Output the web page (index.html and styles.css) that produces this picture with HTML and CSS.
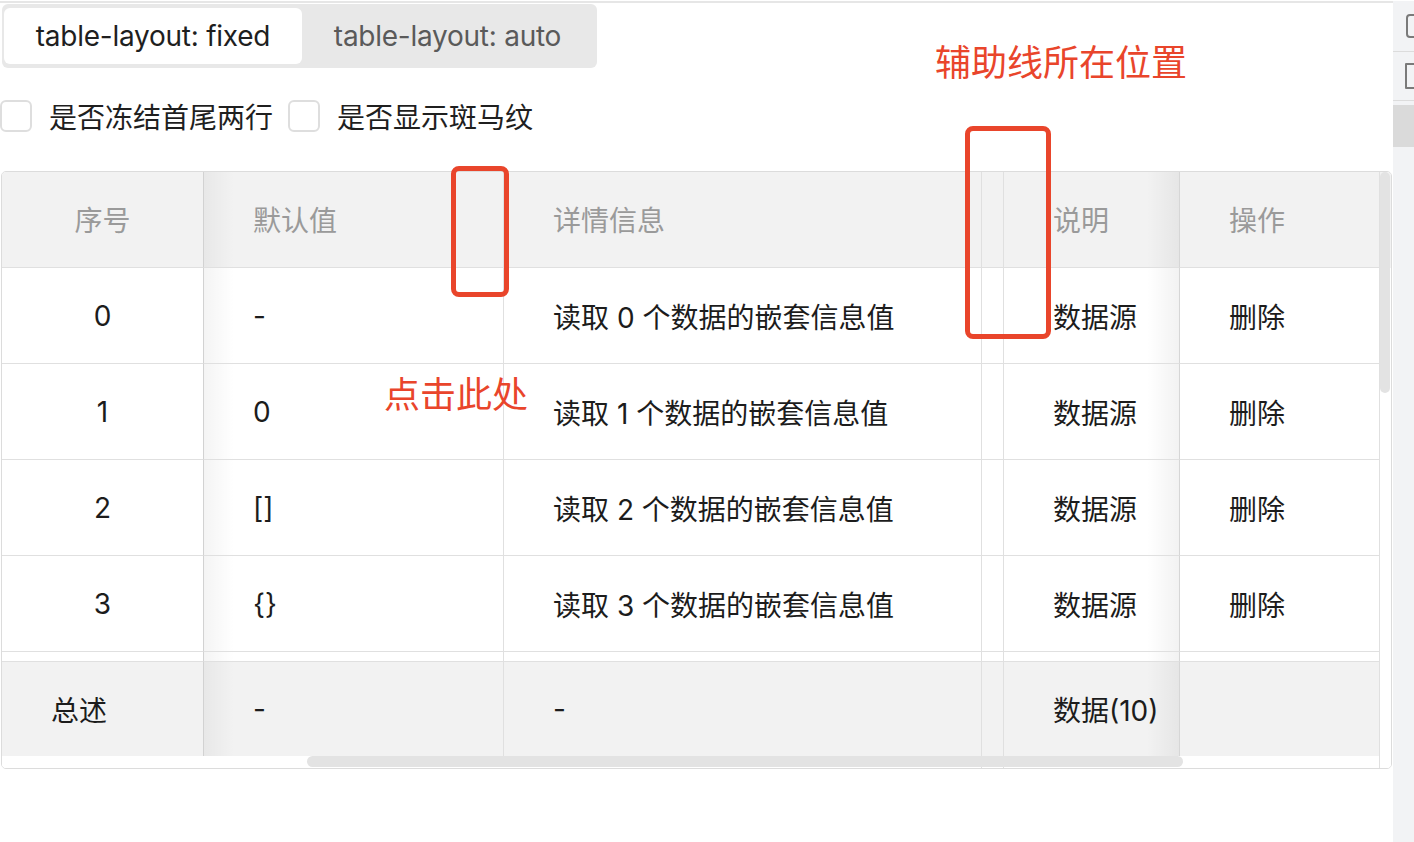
FILE: index.html
```html
<!DOCTYPE html>
<html lang="zh">
<head>
<meta charset="utf-8">
<link rel="stylesheet" href="styles.css">
</head>
<body>
<div class="page">
  <div class="main">
    <div class="seg">
      <div class="tab active t1">table-layout: fixed</div>
      <div class="tab t2">table-layout: auto</div>
    </div>
    <div class="opts">
      <label class="opt"><span class="cb"></span><span>是否冻结首尾两行</span></label>
      <label class="opt"><span class="cb"></span><span>是否显示斑马纹</span></label>
    </div>
    <div class="table">
      <div class="row head">
        <div class="c c1 center">序号</div>
        <div class="c c2">默认值</div>
        <div class="c c3">详情信息</div>
        <div class="c c4"></div>
        <div class="c c5">说明</div>
        <div class="c c6">操作</div>
        <div class="c c7"></div>
      </div>
      <div class="row body">
        <div class="c c1 center">0</div>
        <div class="c c2">-</div>
        <div class="c c3">读取 0 个数据的嵌套信息值</div>
        <div class="c c4"></div>
        <div class="c c5">数据源</div>
        <div class="c c6">删除</div>
        <div class="c c7"></div>
      </div>
      <div class="row body">
        <div class="c c1 center">1</div>
        <div class="c c2">0</div>
        <div class="c c3">读取 1 个数据的嵌套信息值</div>
        <div class="c c4"></div>
        <div class="c c5">数据源</div>
        <div class="c c6">删除</div>
        <div class="c c7"></div>
      </div>
      <div class="row body">
        <div class="c c1 center">2</div>
        <div class="c c2">[]</div>
        <div class="c c3">读取 2 个数据的嵌套信息值</div>
        <div class="c c4"></div>
        <div class="c c5">数据源</div>
        <div class="c c6">删除</div>
        <div class="c c7"></div>
      </div>
      <div class="row body">
        <div class="c c1 center">3</div>
        <div class="c c2">{}</div>
        <div class="c c3">读取 3 个数据的嵌套信息值</div>
        <div class="c c4"></div>
        <div class="c c5">数据源</div>
        <div class="c c6">删除</div>
        <div class="c c7"></div>
      </div>
      <div class="row partial">
        <div class="c c1"></div>
        <div class="c c2"></div>
        <div class="c c3"></div>
        <div class="c c4"></div>
        <div class="c c5"></div>
        <div class="c c6"></div>
        <div class="c c7"></div>
      </div>
      <div class="row foot">
        <div class="c c1">总述</div>
        <div class="c c2">-</div>
        <div class="c c3">-</div>
        <div class="c c4"></div>
        <div class="c c5">数据(10)</div>
        <div class="c c6"></div>
        <div class="c c7"></div>
      </div>
      <div class="row hbar">
        <div class="c c1"></div>
        <div class="c c2"></div>
        <div class="c c3"></div>
        <div class="c c4"></div>
        <div class="c c5"></div>
        <div class="c c6"></div>
        <div class="c c7"></div>
      </div>
      <div class="vthumb"></div>
      <div class="hthumb"></div>
    </div>
  </div>
  <div class="side">
    <div class="side-item"><span class="side-box b1"></span></div>
    <div class="side-item"><span class="side-box b2"></span></div>
    <div class="side-block"></div>
  </div>

  <div class="note note1">辅助线所在位置</div>
  <div class="note note2">点击此处</div>
  <div class="mark mark1"></div>
  <div class="mark mark2"></div>
</div>
</body>
</html>
```

FILE: styles.css
```css
html, body {
  margin: 0;
  padding: 0;
  background: #ffffff;
}

body {
  font-family: Inter, "Noto Sans CJK SC", sans-serif;
  color: #1c1c1c;
  width: 1414px;
  height: 842px;
  overflow: hidden;
}

.page {
  position: relative;
  display: flex;
  width: 1414px;
  height: 842px;
  padding-top: 1px;
  box-sizing: border-box;
}

.main {
  width: 1393px;
  border-top: 2px solid #e6e6e6;
  box-sizing: border-box;
}

/* segmented control */
.seg {
  display: flex;
  width: 595px;
  height: 64px;
  margin: 1px 0 0 2px;
  padding: 4px 2px;
  box-sizing: border-box;
  background: #e8e8e8;
  border-radius: 6px;
}

.tab {
  display: flex;
  align-items: center;
  justify-content: center;
  font-size: 28px;
  letter-spacing: -0.25px;
  color: #5a5a5a;
  border-radius: 6px;
}

.t1 { width: 298px; }
.t2 { width: 291px; }

.tab.active {
  background: #ffffff;
  color: #1f1f1f;
}

/* options */
.opts {
  display: flex;
  gap: 15px;
  margin-top: 32px;
  height: 32px;
}

.opt {
  display: flex;
  align-items: center;
  gap: 17px;
  font-size: 28px;
  color: #1f1f1f;
}

.cb {
  width: 32px;
  height: 32px;
  box-sizing: border-box;
  border: 2px solid #dedede;
  border-radius: 6px;
  background: #fff;
}

/* table */
.table {
  position: relative;
  margin: 39px 0 0 1px;
  width: 1391px;
  border: 1px solid #dcdcdc;
  border-radius: 5px;
  box-sizing: border-box;
  overflow: hidden;
}

.row {
  display: grid;
  grid-template-columns: 202px 300px 478px 22px 176px 200px 11px;
}

.c {
  display: flex;
  align-items: center;
  padding-left: 49px;
  box-sizing: border-box;
  font-size: 28px;
  border-right: 1px solid #e0e0e0;
  border-bottom: 1px solid #e0e0e0;
  white-space: nowrap;
  background-color: #ffffff;
}

.c.center {
  justify-content: center;
  padding-left: 0;
}

.c1 { border-right-color: #d2d2d2; }
.c5 { border-right-color: #d6d6d6; }
.c4 { padding-left: 0; }
.c7 { border-right: none; border-bottom: none; padding-left: 0; }

.c2 {
  background-image: linear-gradient(to right, rgba(0, 0, 0, 0.045), rgba(0, 0, 0, 0) 30px);
}

.c5 {
  background-image: linear-gradient(to left, rgba(0, 0, 0, 0.05), rgba(0, 0, 0, 0) 32px);
}

.head .c {
  height: 96px;
  padding-bottom: 2px;
  color: #9a9a9a;
  background-color: #f2f2f2;
}

.body .c {
  height: 96px;
}

.partial .c {
  height: 10px;
}

.foot .c {
  height: 94px;
  border-bottom: none;
  background-color: #f2f2f2;
  color: #1c1c1c;
}

.foot .c7 { background-color: #ffffff; }

.hbar .c {
  height: 12px;
  border-bottom: none;
  background: #ffffff;
}

.hbar .c1,
.hbar .c2,
.hbar .c5 {
  border-right-color: transparent;
}

.vthumb {
  position: absolute;
  left: 1378px;
  top: 0;
  width: 10px;
  height: 221px;
  background: #e3e3e3;
  border-radius: 5px;
}

.hthumb {
  position: absolute;
  left: 305px;
  top: 584px;
  width: 876px;
  height: 11px;
  background: #e3e3e3;
  border-radius: 6px;
}

/* side panel */
.side {
  width: 21px;
  height: 841px;
  background: #f2f3f5;
  display: flex;
  flex-direction: column;
}

.side-item {
  height: 48px;
  border-bottom: 1px solid #dcdcdc;
  display: flex;
  align-items: center;
  justify-content: flex-end;
  overflow: hidden;
}

.side-item:first-child {
  height: 50px;
}

.side-box {
  display: block;
  width: 14px;
  height: 20px;
  border: 2px solid #7a7a7a;
  border-radius: 4px;
  margin-right: -10px;
  flex: none;
}

.b2 {
  height: 22px;
  border-radius: 1px;
  margin-right: -9px;
}

.side-block {
  margin-top: 4px;
  height: 42px;
  background: #dadada;
}

/* annotations */
.note {
  position: absolute;
  font-size: 36px;
  line-height: 36px;
  color: #e9452b;
  white-space: nowrap;
}

.note1 {
  left: 935px;
  top: 45px;
}

.note2 {
  left: 384px;
  top: 377px;
}

.mark {
  position: absolute;
  border: 5px solid #e9452b;
  border-radius: 8px;
  box-sizing: border-box;
}

.mark1 {
  left: 451px;
  top: 166px;
  width: 58px;
  height: 131px;
}

.mark2 {
  left: 965px;
  top: 126px;
  width: 86px;
  height: 213px;
}
```
